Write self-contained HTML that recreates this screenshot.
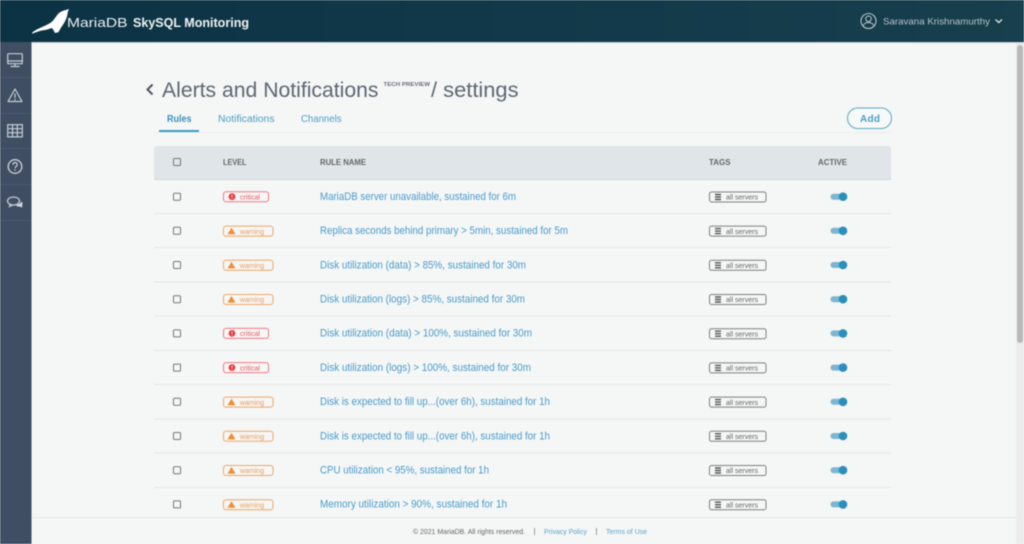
<!DOCTYPE html>
<html lang="en"><head><meta charset="utf-8"><title>Alerts and Notifications</title>
<style>
html,body{margin:0;padding:0;width:1024px;height:544px;overflow:hidden;background:#f5f6f6}
svg{display:block;font-family:"Liberation Sans",sans-serif;filter:blur(.4px)}
.r{font-size:11px;fill:#4a9ccb}
.w{font-size:7.5px;fill:#ef9c58}
.c{font-size:7.5px;fill:#ec5a63}
.t{font-size:7.5px;fill:#666}
.h{font-size:8.5px;font-weight:bold;fill:#666}
</style></head><body>
<svg width="1024" height="544" viewBox="0 0 1024 544" xmlns="http://www.w3.org/2000/svg">
<defs>
<linearGradient id="hd" x1="0" x2="1" y1="0" y2="0"><stop offset="0" stop-color="#0c3344"/><stop offset="1" stop-color="#173f4e"/></linearGradient>
<g id="cb"><rect x="173.5" y="-3.5" width="7" height="7" rx="1" fill="none" stroke="#777" stroke-width="1"/></g>
<g id="tog"><rect x="830.5" y="-3" width="15" height="6" rx="3" fill="#7db6d2"/><circle cx="843" cy="0" r="4.3" fill="#2a8fbd"/></g>
<g id="tag"><rect x="709.5" y="-4.7" width="56.5" height="10" rx="2" fill="#f5f6f6" stroke="#808080" stroke-width="1"/><path d="M715 -2.2h6M715 .3h6M715 2.8h6" stroke="#555" stroke-width="1.4"/></g>
<g id="warnb"><rect x="223.5" y="-4.7" width="49.5" height="10" rx="2.5" fill="#f5f6f6" stroke="#f0a765" stroke-width="1"/><path d="M231.5 -3.2L235.5 3.4H227.5Z" fill="#ee8f35"/></g>
<g id="critb"><rect x="223.5" y="-5" width="45" height="10" rx="2.5" fill="#f5f6f6" stroke="#ee7a82" stroke-width="1"/><circle cx="232" cy="0" r="3.4" fill="#e5404a"/><path d="M232 -1.8v2M232 1.2v.8" stroke="#fff" stroke-width=".8"/></g>
</defs>
<rect width="1024" height="544" fill="#f5f6f6"/>
<rect width="1024" height="42" fill="url(#hd)"/>
<rect y="42" width="1024" height="1" fill="#c9cfd6"/>
<path d="M32.3 32.3C37 29 41 27.5 45 25.7C49 24 51.5 22.5 53.3 20.3C56 17 57.5 14 60 12.3C62.5 10.5 66 10.2 69 9L67.7 12.3C67.5 15 66.8 17.5 65.7 19.7C64.8 22 63.5 24 62.3 25.7C60.5 28 59.5 30.5 58.3 32.3L55 33C54 31 53 29 51.7 28C49 29 46 30 43.3 30.3C39 30.8 36 32.5 32.3 33.7Z" fill="#fff"/>
<text x="67" y="27" font-size="12.5" fill="#e9eef0" textLength="60.5" lengthAdjust="spacingAndGlyphs">MariaDB</text>
<text x="133" y="27" font-size="12.5" font-weight="bold" fill="#eef2f3" textLength="116" lengthAdjust="spacingAndGlyphs">SkySQL Monitoring</text>
<circle cx="868.5" cy="21" r="7.5" fill="none" stroke="#b6c4ca" stroke-width="1.1"/>
<circle cx="868.5" cy="18.8" r="2.8" fill="none" stroke="#b6c4ca" stroke-width="1"/>
<path d="M863 26C864 23 866 22.5 868.5 22.5S873 23 874 26" fill="none" stroke="#b6c4ca" stroke-width="1"/>
<text x="883" y="24.5" font-size="9.5" fill="#b6c4ca" textLength="107" lengthAdjust="spacingAndGlyphs">Saravana Krishnamurthy</text>
<path d="M995.5 19.5L998.8 22.5L1002 19.5" fill="none" stroke="#d5dee1" stroke-width="1.4"/>

<rect y="42" width="31.5" height="502" fill="#3f4e63"/>
<g stroke="#4a586c" stroke-width="1"><path d="M0 77.5H31M0 113.5H31M0 148.5H31M0 184.5H31M0 220.5H31"/></g>
<g fill="none" stroke="#c6cdd5" stroke-width="1.2">
<rect x="7.7" y="53.7" width="14.6" height="10" rx="1"/><path d="M7.7 61H22.3M15 64V66.5M10.5 66.5H19.5"/>
<path d="M15 89L22 101.5H8Z" stroke-linejoin="round"/><path d="M15 93.5V98M15 99V100.5"/>
<rect x="7.7" y="124.7" width="14.6" height="12.2"/><path d="M7.7 128.7H22.3M7.7 132.7H22.3M12.5 124.7V137M17.3 124.7V137" />
<circle cx="15" cy="166.5" r="6.8" stroke-width="1.4"/><path d="M12.8 164.8C12.8 161.8 17.2 161.8 17.2 164.8C17.2 166.5 15 166.5 15 168.3M15 169.3V170.6" stroke-width="1.3"/>
<ellipse cx="13.5" cy="201" rx="6" ry="4"/><path d="M10.5 204L9.5 206.5L13 205"/>
</g>
<path d="M18 204.5C20 204 21 203 21 201.5C22.5 202.5 23 204 22 205.5L22.5 207.5L19.5 206.5C18 206.8 17 206 16 205.5Z" fill="#d8dde2"/>

<path d="M152.5 84.5L147.5 89.5L152.5 94.5" fill="none" stroke="#4d5763" stroke-width="2"/>
<text x="162" y="97" font-size="21" fill="#5d6773" textLength="216.5" lengthAdjust="spacingAndGlyphs">Alerts and Notifications</text>
<text x="383.5" y="86" font-size="5.5" font-weight="bold" fill="#666f79" textLength="46.5" lengthAdjust="spacingAndGlyphs">TECH PREVIEW</text>
<text x="431" y="97" font-size="21" fill="#5d6773" textLength="87.5" lengthAdjust="spacingAndGlyphs">/ settings</text>

<text x="167" y="122" font-size="10" font-weight="bold" fill="#3c93bb" textLength="24.5" lengthAdjust="spacingAndGlyphs">Rules</text>
<text x="218" y="122" font-size="10" fill="#4d9fc5" textLength="56.5" lengthAdjust="spacingAndGlyphs">Notifications</text>
<text x="301" y="122" font-size="10" fill="#4d9fc5" textLength="40.5" lengthAdjust="spacingAndGlyphs">Channels</text>
<rect x="154" y="132" width="737" height="1" fill="#ebeded"/>
<rect x="159" y="130" width="40" height="2" fill="#3a9cc4"/>
<rect x="847.5" y="108" width="44" height="20.5" rx="10.2" fill="#f7f8f8" stroke="#5aa8ca" stroke-width="1"/>
<text x="860" y="122" font-size="10" font-weight="bold" fill="#4a9fc4" textLength="20" lengthAdjust="spacing">Add</text>

<path d="M154 179.5V149a3 3 0 0 1 3-3H888a3 3 0 0 1 3 3V179.5Z" fill="#dfe5e8"/>
<use href="#cb" y="162"/>
<text class="h" x="223" y="165" textLength="23.5" lengthAdjust="spacingAndGlyphs">LEVEL</text>
<text class="h" x="320" y="165" textLength="46" lengthAdjust="spacingAndGlyphs">RULE NAME</text>
<text class="h" x="709" y="165" textLength="21.5" lengthAdjust="spacingAndGlyphs">TAGS</text>
<text class="h" x="818" y="165" textLength="29" lengthAdjust="spacingAndGlyphs">ACTIVE</text>
<rect x="154" y="179" width="737" height="1" fill="#d4d9dc"/>
<path d="M154 213.5H891M154 247.5H891M154 282H891M154 316H891M154 350.5H891M154 384.5H891M154 419H891M154 453H891M154 487.5H891" stroke="#e4e6e7" stroke-width="1"/>

<g transform="translate(0,196.7)"><use href="#cb"/><use href="#critb"/><text class="c" x="240" y="2.7" textLength="20" lengthAdjust="spacingAndGlyphs">critical</text><text class="r" x="320" y="3.3" textLength="196" lengthAdjust="spacingAndGlyphs">MariaDB server unavailable, sustained for 6m</text><use href="#tag"/><text class="t" x="726" y="3" textLength="32" lengthAdjust="spacingAndGlyphs">all servers</text><use href="#tog"/></g>
<g transform="translate(0,230.8)"><use href="#cb"/><use href="#warnb"/><text class="w" x="240" y="3" textLength="24" lengthAdjust="spacingAndGlyphs">warning</text><text class="r" x="320" y="3.3" textLength="248" lengthAdjust="spacingAndGlyphs">Replica seconds behind primary &gt; 5min, sustained for 5m</text><use href="#tag"/><text class="t" x="726" y="3" textLength="32" lengthAdjust="spacingAndGlyphs">all servers</text><use href="#tog"/></g>
<g transform="translate(0,265)"><use href="#cb"/><use href="#warnb"/><text class="w" x="240" y="3" textLength="24" lengthAdjust="spacingAndGlyphs">warning</text><text class="r" x="320" y="3.3" textLength="206" lengthAdjust="spacingAndGlyphs">Disk utilization (data) &gt; 85%, sustained for 30m</text><use href="#tag"/><text class="t" x="726" y="3" textLength="32" lengthAdjust="spacingAndGlyphs">all servers</text><use href="#tog"/></g>
<g transform="translate(0,299.2)"><use href="#cb"/><use href="#warnb"/><text class="w" x="240" y="3" textLength="24" lengthAdjust="spacingAndGlyphs">warning</text><text class="r" x="320" y="3.3" textLength="205" lengthAdjust="spacingAndGlyphs">Disk utilization (logs) &gt; 85%, sustained for 30m</text><use href="#tag"/><text class="t" x="726" y="3" textLength="32" lengthAdjust="spacingAndGlyphs">all servers</text><use href="#tog"/></g>
<g transform="translate(0,333.4)"><use href="#cb"/><use href="#critb"/><text class="c" x="240" y="2.7" textLength="20" lengthAdjust="spacingAndGlyphs">critical</text><text class="r" x="320" y="3.3" textLength="212" lengthAdjust="spacingAndGlyphs">Disk utilization (data) &gt; 100%, sustained for 30m</text><use href="#tag"/><text class="t" x="726" y="3" textLength="32" lengthAdjust="spacingAndGlyphs">all servers</text><use href="#tog"/></g>
<g transform="translate(0,367.6)"><use href="#cb"/><use href="#critb"/><text class="c" x="240" y="2.7" textLength="20" lengthAdjust="spacingAndGlyphs">critical</text><text class="r" x="320" y="3.3" textLength="211" lengthAdjust="spacingAndGlyphs">Disk utilization (logs) &gt; 100%, sustained for 30m</text><use href="#tag"/><text class="t" x="726" y="3" textLength="32" lengthAdjust="spacingAndGlyphs">all servers</text><use href="#tog"/></g>
<g transform="translate(0,401.8)"><use href="#cb"/><use href="#warnb"/><text class="w" x="240" y="3" textLength="24" lengthAdjust="spacingAndGlyphs">warning</text><text class="r" x="320" y="3.3" textLength="230" lengthAdjust="spacingAndGlyphs">Disk is expected to fill up...(over 6h), sustained for 1h</text><use href="#tag"/><text class="t" x="726" y="3" textLength="32" lengthAdjust="spacingAndGlyphs">all servers</text><use href="#tog"/></g>
<g transform="translate(0,436)"><use href="#cb"/><use href="#warnb"/><text class="w" x="240" y="3" textLength="24" lengthAdjust="spacingAndGlyphs">warning</text><text class="r" x="320" y="3.3" textLength="230" lengthAdjust="spacingAndGlyphs">Disk is expected to fill up...(over 6h), sustained for 1h</text><use href="#tag"/><text class="t" x="726" y="3" textLength="32" lengthAdjust="spacingAndGlyphs">all servers</text><use href="#tog"/></g>
<g transform="translate(0,470.2)"><use href="#cb"/><use href="#warnb"/><text class="w" x="240" y="3" textLength="24" lengthAdjust="spacingAndGlyphs">warning</text><text class="r" x="320" y="3.3" textLength="169" lengthAdjust="spacingAndGlyphs">CPU utilization &lt; 95%, sustained for 1h</text><use href="#tag"/><text class="t" x="726" y="3" textLength="32" lengthAdjust="spacingAndGlyphs">all servers</text><use href="#tog"/></g>
<g transform="translate(0,504.4)"><use href="#cb"/><use href="#warnb"/><text class="w" x="240" y="3" textLength="24" lengthAdjust="spacingAndGlyphs">warning</text><text class="r" x="320" y="3.3" textLength="187" lengthAdjust="spacingAndGlyphs">Memory utilization &gt; 90%, sustained for 1h</text><use href="#tag"/><text class="t" x="726" y="3" textLength="32" lengthAdjust="spacingAndGlyphs">all servers</text><use href="#tog"/></g>

<rect x="31.5" y="517" width="984.5" height="27" fill="#f5f6f6"/>
<rect x="31.5" y="517" width="984.5" height="1" fill="#e4e6e7"/>
<text x="413" y="534" font-size="7.5" fill="#666" textLength="112" lengthAdjust="spacingAndGlyphs">© 2021 MariaDB. All rights reserved.</text>
<rect x="534" y="528" width="1" height="7" fill="#999"/>
<text x="544" y="534" font-size="7.5" fill="#5ba5cc" textLength="43" lengthAdjust="spacingAndGlyphs">Privacy Policy</text>
<rect x="596" y="528" width="1" height="7" fill="#999"/>
<text x="606" y="534" font-size="7.5" fill="#5ba5cc" textLength="41" lengthAdjust="spacingAndGlyphs">Terms of Use</text>

<rect x="1016" y="43" width="8" height="501" fill="#ececec"/>
<rect x="1017" y="45" width="6" height="298" rx="3" fill="#b9b9b9"/>
</svg>
</body></html>
